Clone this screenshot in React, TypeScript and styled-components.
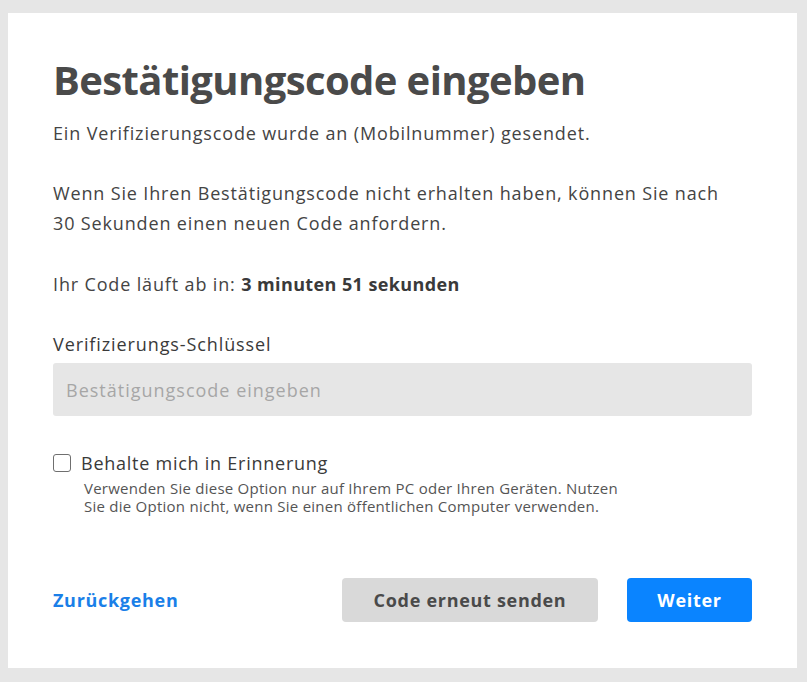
import React from "react";
import styled, { createGlobalStyle } from "styled-components";

const Global = createGlobalStyle`
  html, body { margin: 0; padding: 0; background: #e6e6e6; }
  body { font-family: "Open Sans", Lato, sans-serif; color: #444; }
  * { box-sizing: border-box; }
`;

const Page = styled.div`
  padding: 13px 10px 14px 8px;
  min-height: 682px;
`;

const Card = styled.main`
  background: #fff;
  padding: 43px 45px 46px 45px;
  height: 655px;
  display: flex;
  flex-direction: column;
`;

const Title = styled.h1`
  margin: 0 0 14px;
  font-size: 40px;
  line-height: 48px;
  font-weight: 700;
  letter-spacing: -0.6px;
  color: #4a4a4a;
`;

const Text = styled.p<{ $gap?: number }>`
  margin: 0 0 ${(p) => p.$gap ?? 30}px;
  font-size: 18px;
  line-height: 30px;
  letter-spacing: 0.85px;
  color: #444;
`;

const Strong = styled.strong`
  font-weight: 700;
  letter-spacing: 0.4px;
  color: #3a3a3a;
`;

const Label = styled.label`
  display: block;
  font-size: 18px;
  line-height: 30px;
  letter-spacing: 0.9px;
  color: #3a3a3a;
  margin-bottom: 4px;
`;

const Input = styled.input`
  width: 100%;
  height: 53px;
  border: none;
  border-radius: 3px;
  background: #e6e6e6;
  padding: 0 13px;
  font-family: inherit;
  font-size: 18px;
  letter-spacing: 1px;
  color: #444;
  outline: none;
  &::placeholder { color: #a6a6a6; }
`;

const CheckRow = styled.label`
  display: flex;
  align-items: center;
  gap: 10px;
  margin-top: 35px;
  font-size: 18px;
  line-height: 24px;
  letter-spacing: 0.75px;
  color: #3a3a3a;
`;

const Box = styled.span`
  width: 18px;
  height: 18px;
  border: 1.5px solid #6f6f6f;
  border-radius: 3px;
  background: #fff;
  flex: none;
`;

const Hint = styled.p`
  margin: 4px 0 0 31px;
  font-size: 15px;
  line-height: 18px;
  letter-spacing: 0.25px;
  color: #555;
`;

const HintLine = styled.span`
  display: block;
`;

const Footer = styled.div`
  margin-top: auto;
  display: flex;
  align-items: center;
  gap: 29px;
  letter-spacing: 0.7px;
`;

const BackLink = styled.a`
  margin-right: auto;
  color: #1a7fe8;
  font-size: 18px;
  font-weight: 700;
  text-decoration: none;
  cursor: pointer;
`;

const Button = styled.button<{ $primary?: boolean }>`
  height: 44px;
  border: none;
  border-radius: 4px;
  padding: 0 24px;
  font-family: inherit;
  font-size: 18px;
  font-weight: 700;
  letter-spacing: inherit;
  cursor: pointer;
  background: ${(p) => (p.$primary ? "#0a84ff" : "#d9d9d9")};
  color: ${(p) => (p.$primary ? "#fff" : "#4a4a4a")};
  min-width: ${(p) => (p.$primary ? "125px" : "256px")};
`;

export default function App() {
  return (
    <>
      <Global />
      <Page>
        <Card>
          <Title>Bestätigungscode eingeben</Title>
          <Text>Ein Verifizierungscode wurde an (Mobilnummer) gesendet.</Text>
          <Text $gap={31}>
            Wenn Sie Ihren Bestätigungscode nicht erhalten haben, können Sie nach
            <br />
            30 Sekunden einen neuen Code anfordern.
          </Text>
          <Text>
            Ihr Code läuft ab in: <Strong>3 minuten 51 sekunden</Strong>
          </Text>
          <Label htmlFor="code">Verifizierungs-Schlüssel</Label>
          <Input id="code" placeholder="Bestätigungscode eingeben" />
          <CheckRow>
            <Box />
            Behalte mich in Erinnerung
          </CheckRow>
          <Hint>
            <HintLine>
              Verwenden Sie diese Option nur auf Ihrem PC oder Ihren Geräten. Nutzen
            </HintLine>
            <HintLine>
              Sie die Option nicht, wenn Sie einen öffentlichen Computer verwenden.
            </HintLine>
          </Hint>
          <Footer>
            <BackLink>Zurückgehen</BackLink>
            <Button>Code erneut senden</Button>
            <Button $primary>Weiter</Button>
          </Footer>
        </Card>
      </Page>
    </>
  );
}
